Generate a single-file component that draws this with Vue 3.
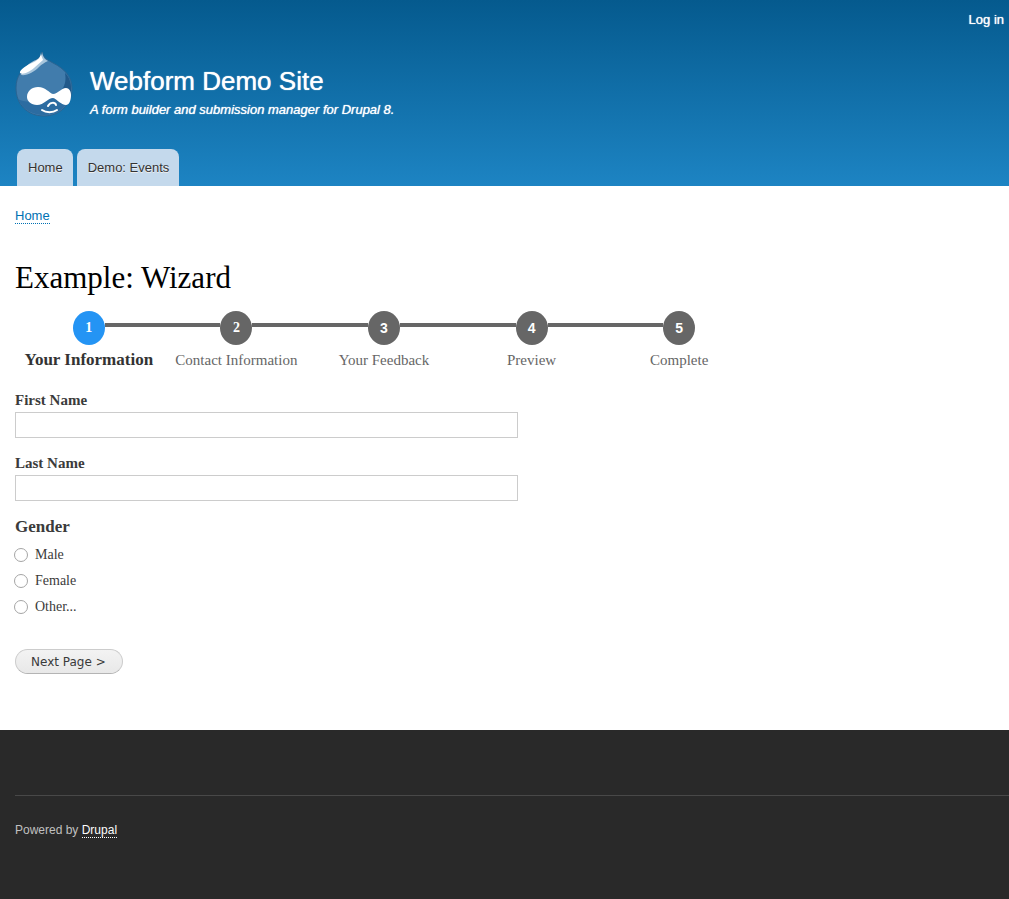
<script setup>
import { ref } from 'vue'

const tabs = ['Home', 'Demo: Events']
const steps = [
  { title: 'Your Information', serif: true },
  { title: 'Contact Information', serif: true },
  { title: 'Your Feedback', serif: false },
  { title: 'Preview', serif: false },
  { title: 'Complete', serif: false }
]
const current = ref(0)
const genders = ['Male', 'Female', 'Other...']
const gender = ref('')
const firstName = ref('')
const lastName = ref('')
</script>

<template>
  <div class="page">
    <header class="header">
      <nav class="account"><a href="#">Log in</a></nav>
      <div class="branding">
        <a href="#" class="logo" aria-label="Home">
          <svg width="58" height="66" viewBox="0 0 58 66" aria-hidden="true">
            <path d="M27 1C28 7 33 9 38 12C50 18 57 26 57 38C57 53 45 65 29 65C12 65 1 53 1 37C1 25 7 18 16 12C23 8 27 5 27 1Z" fill="#417cac" stroke="#2a6492" />
            <path d="M50 22C53 34 45 44 34 48C23 51 9 52 3 48C8 59 18 64 29 64C45 64 56 53 56 38C56 31 54 26 50 22Z" fill="#2c6ca1" />
            <path d="M50 22C53 34 45 44 38 47L51 53C55 47 56 43 56 38C56 31 54 26 50 22Z" fill="#21598a" />
            <path d="M27 1C28 7 31 9 33 10C29 12 27 13 24 16C19 21 12 25 6 24C9 15 16 11 21 9C25 7 27 5 27 1Z" fill="#a9c6dc" />
            <path d="M26 1C26 6 28 8 28 9C25 12 22 14 19 17C14 21 8 24 5 22C4 19 12 14 19 11C23 9 26 6 26 1Z" fill="#fff" />
            <path d="M23 36C31 36 34 42 38 43C43 43 46 37 51 37C54 37 56 40 56 44C56 50 54 54 51 54C46 54 42 48 38 47C33 47 29 54 22 54C16 54 12 50 12 46C12 40 17 36 23 36Z" fill="#fff" />
            <path d="M33 55C35 51 40 51 41 54" fill="none" stroke="#fff" stroke-width="2" stroke-linecap="round" />
            <path d="M27 59C31 62 38 62 42 59" fill="none" stroke="#fff" stroke-width="2" stroke-linecap="round" />
          </svg>
        </a>
        <div>
          <a href="#" class="site-name">Webform Demo Site</a>
          <p class="slogan">A form builder and submission manager for Drupal 8.</p>
        </div>
      </div>
      <nav class="tabs">
        <a v-for="t in tabs" :key="t" href="#">{{ t }}</a>
      </nav>
    </header>

    <main class="main">
      <nav class="breadcrumb"><a href="#">Home</a></nav>
      <h1>Example: Wizard</h1>
      <ol class="progress">
        <li v-for="(s, i) in steps" :key="s.title" :class="{ current: i === current }">
          <span class="marker" :class="{ serif: s.serif }">{{ i + 1 }}</span>
          <span class="title">{{ s.title }}</span>
        </li>
      </ol>
      <form @submit.prevent>
        <div class="field">
          <label for="first-name">First Name</label>
          <input id="first-name" v-model="firstName" type="text" />
        </div>
        <div class="field">
          <label for="last-name">Last Name</label>
          <input id="last-name" v-model="lastName" type="text" />
        </div>
        <fieldset>
          <legend>Gender</legend>
          <label v-for="g in genders" :key="g" class="option">
            <input v-model="gender" type="radio" name="gender" :value="g" />
            <span>{{ g }}</span>
          </label>
        </fieldset>
        <button type="submit">Next Page &gt;</button>
      </form>
    </main>

    <footer class="footer">
      <p>Powered by <a href="#">Drupal</a></p>
    </footer>
  </div>
</template>

<style>
body {
  margin: 0;
  background: #292929;
}
</style>

<style scoped>
.page {
  display: flex;
  flex-direction: column;
  min-height: 100vh;
  background: #fff;
  color: #3b3b3b;
  font-family: Georgia, "Liberation Serif", serif;
  font-size: 14px;
}
a {
  text-decoration: none;
}
.header {
  display: flex;
  flex-direction: column;
  background: linear-gradient(#055a8e, #1d84c3);
  font-family: "Liberation Sans", sans-serif;
}
.account {
  display: flex;
  justify-content: flex-end;
  padding: 10px 5px 0;
  font-size: 13px;
  line-height: 20px;
}
.account a {
  color: #fff;
  text-shadow: 0 0 1px #fff;
}
.branding {
  display: flex;
  gap: 17px;
  padding: 21px 15px 0;
}
.logo {
  display: block;
  height: 66px;
}
.site-name {
  display: block;
  margin-top: 14px;
  color: #fff;
  font-size: 26px;
  line-height: 32px;
  text-shadow: 0 0 1px #fff;
}
.slogan {
  margin: 4px 0 0;
  color: #fff;
  font-size: 13px;
  font-style: italic;
  line-height: 18px;
  text-shadow: 0 0 1px #fff;
}
.tabs {
  display: flex;
  gap: 4px;
  padding: 30px 17px 0;
}
.tabs a {
  padding: 0 10px 0 11px;
  border-radius: 8px 8px 0 0;
  background: #c4d9ec;
  color: #333;
  font-size: 13px;
  line-height: 37px;
  text-shadow: 0 1px #eee;
}
.main {
  padding: 21px 15px 56px;
}
.breadcrumb {
  font-family: "Liberation Sans", sans-serif;
  font-size: 13px;
  line-height: 18px;
}
.breadcrumb a {
  color: #0071b3;
  border-bottom: 1px dotted #0071b3;
}
h1 {
  margin: 34px 0 0;
  color: #000;
  font-size: 31px;
  font-weight: 400;
  line-height: 38px;
}
.progress {
  display: grid;
  grid-template-columns: repeat(5, 1fr);
  max-width: 738px;
  margin: 14px 0 0;
  padding: 0;
  list-style: none;
  color: #666;
  text-align: center;
}
.progress li {
  display: grid;
  grid-template-columns: 1fr 32px 1fr;
  align-items: center;
}
.marker {
  grid-column: 2;
  grid-row: 1;
  border-radius: 50%;
  background: #666;
  color: #fff;
  font-family: "Liberation Sans", sans-serif;
  font-size: 14px;
  font-weight: 700;
  line-height: 34px;
}
.marker.serif {
  font-family: Georgia, "Liberation Serif", serif;
}
.progress li::before,
.progress li::after {
  content: "";
  grid-row: 1;
  height: 4px;
  margin-bottom: 6px;
  background: #666;
}
.progress li::before {
  grid-column: 1;
}
.progress li::after {
  grid-column: 3;
}
.progress li:first-child::before,
.progress li:last-child::after {
  background: none;
}
.title {
  grid-column: 1 / -1;
  grid-row: 2;
  margin-top: 6px;
  font-size: 15px;
  line-height: 18px;
}
.current .marker {
  background: #2494f4;
}
.current .title {
  color: #333;
  font-size: 17px;
  font-weight: 700;
}
form {
  margin-top: 22px;
}
.field {
  margin-bottom: 16px;
}
.field label {
  display: block;
  margin-bottom: 2px;
  font-size: 15px;
  font-weight: 700;
  line-height: 19px;
}
.field input {
  display: block;
  box-sizing: border-box;
  width: 100%;
  max-width: 503px;
  height: 26px;
  padding: 4px;
  border: 1px solid #ccc;
  background: #fff;
  font-size: 14px;
}
fieldset {
  margin: 0;
  padding: 0;
  border: 0;
}
legend {
  padding: 0;
  margin-bottom: 5px;
  font-size: 17px;
  font-weight: 700;
  line-height: 20px;
}
.option {
  display: flex;
  align-items: center;
  gap: 7px;
  width: fit-content;
  margin-left: -1px;
  line-height: 26px;
}
.option input {
  appearance: none;
  width: 14px;
  height: 14px;
  margin: 0;
  border: 1px solid #a5a5a5;
  border-radius: 50%;
  background: #fff;
}
.option input:checked {
  box-shadow: inset 0 0 0 3px #fff;
  background: #555;
}
button {
  display: block;
  margin-top: 29px;
  padding: 4px 16px 2px 15px;
  border: 1px solid #ccc;
  border-bottom-color: #b4b4b4;
  border-radius: 15px;
  background: linear-gradient(#f3f3f3, #e8e8e8);
  color: #3a3a3a;
  font-family: "Lucida Grande", "DejaVu Sans", sans-serif;
  font-size: 12px;
  line-height: 17px;
}
.footer {
  flex: 1;
  padding: 65px 0 60px 15px;
  background: #292929;
  color: #c0c0c0;
  font-family: "Liberation Sans", sans-serif;
  font-size: 12px;
}
.footer p {
  margin: 0;
  padding-top: 24px;
  border-top: 1px solid #484848;
  line-height: 20px;
}
.footer a {
  color: #fcfcfc;
  border-bottom: 1px dotted #fcfcfc;
}
</style>
